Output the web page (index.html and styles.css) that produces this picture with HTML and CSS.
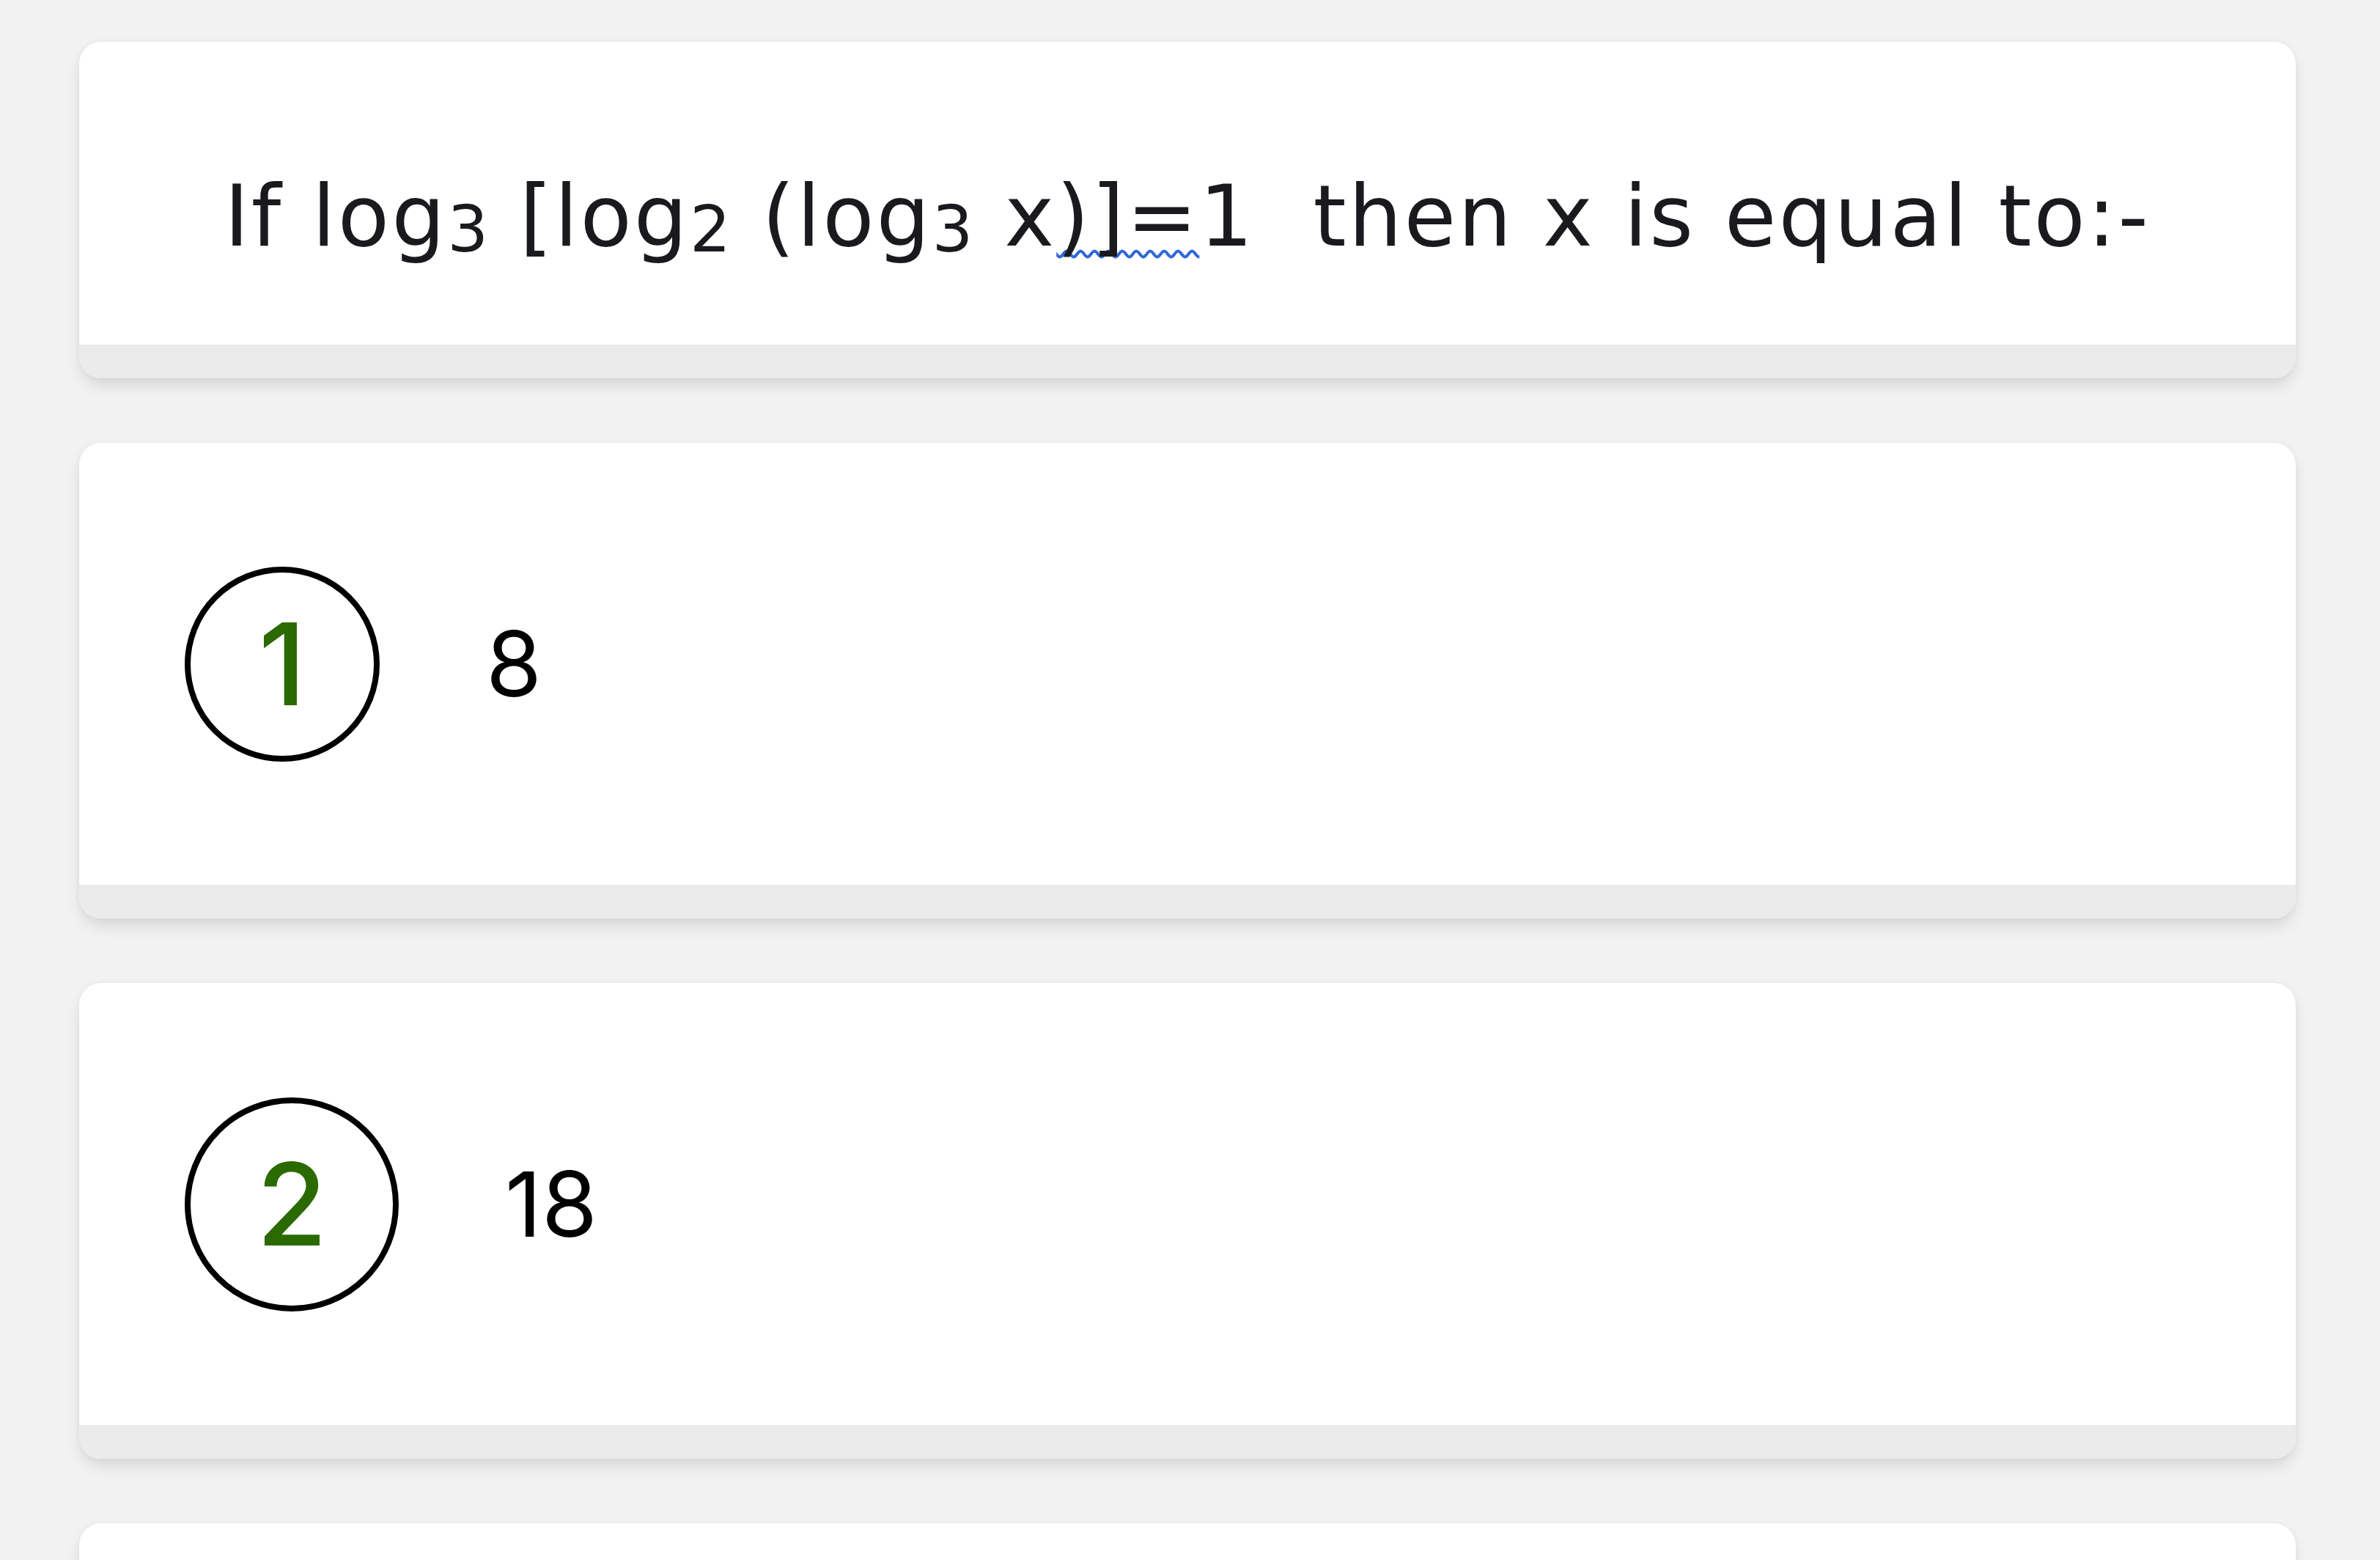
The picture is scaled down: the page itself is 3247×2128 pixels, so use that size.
FILE: index.html
```html
<!DOCTYPE html>
<html lang="en">
<head>
<meta charset="utf-8">
<title>Question</title>
<link rel="stylesheet" href="styles.css">
</head>
<body>
<main class="page">
  <section class="card">
    <div class="question">If log<span class="sub">3</span> [log<span class="sub">2</span> (log<span class="sub">3</span> x<span class="spell">)]=</span>1&nbsp; then x is equal to:-</div>
    <div class="card-foot"></div>
  </section>
  <section class="card">
    <div class="option">
      <div class="badge badge-sm">1</div>
      <div class="answer">8</div>
    </div>
    <div class="card-foot"></div>
  </section>
  <section class="card">
    <div class="option">
      <div class="badge badge-lg">2</div>
      <div class="answer">18</div>
    </div>
    <div class="card-foot"></div>
  </section>
  <section class="card">
    <div class="option"></div>
    <div class="card-foot"></div>
  </section>
</main>
</body>
</html>
```

FILE: styles.css
```css
html, body {
  margin: 0;
  padding: 0;
  background: #f2f2f2;
  overflow: hidden;
}

.page {
  width: 3024px;
  margin-left: 108px;
  padding-top: 57px;
  display: flex;
  flex-direction: column;
  gap: 88px;
}

.card {
  background: #fff;
  border-radius: 30px;
  overflow: hidden;
  box-shadow: 0 12px 22px -4px rgba(0, 0, 0, 0.13), 0 0 10px rgba(0, 0, 0, 0.04);
}

.card-foot {
  height: 46px;
  background: #ebebeb;
}

.question {
  padding: 168px 0 105px;
  text-align: center;
  font-family: "DejaVu Sans", Verdana, sans-serif;
  font-size: 115px;
  line-height: 140px;
  letter-spacing: 3px;
  color: #1a1a1e;
  white-space: nowrap;
}

.sub {
  font-size: 88px;
  line-height: 1;
  vertical-align: -8px;
}

.spell {
  text-decoration: underline wavy #2f67d6;
  text-decoration-thickness: 4px;
  text-underline-offset: 6px;
  text-decoration-skip-ink: none;
}

.option {
  height: 603px;
  box-sizing: border-box;
  padding-left: 144px;
  display: flex;
  align-items: center;
  gap: 145px;
}

.badge {
  box-sizing: border-box;
  border: 8px solid #000;
  border-radius: 50%;
  display: flex;
  align-items: center;
  justify-content: center;
  font-family: Inter, "Noto Sans", sans-serif;
  font-size: 156px;
  font-weight: 500;
  line-height: 1;
  color: #2a6a00;
  flex: none;
}

.badge-sm {
  width: 266px;
  height: 266px;
}

.badge-lg {
  width: 292px;
  height: 292px;
}

.answer {
  font-family: Inter, "Noto Sans", sans-serif;
  font-size: 123px;
  line-height: 1;
  color: #000;
}
```
